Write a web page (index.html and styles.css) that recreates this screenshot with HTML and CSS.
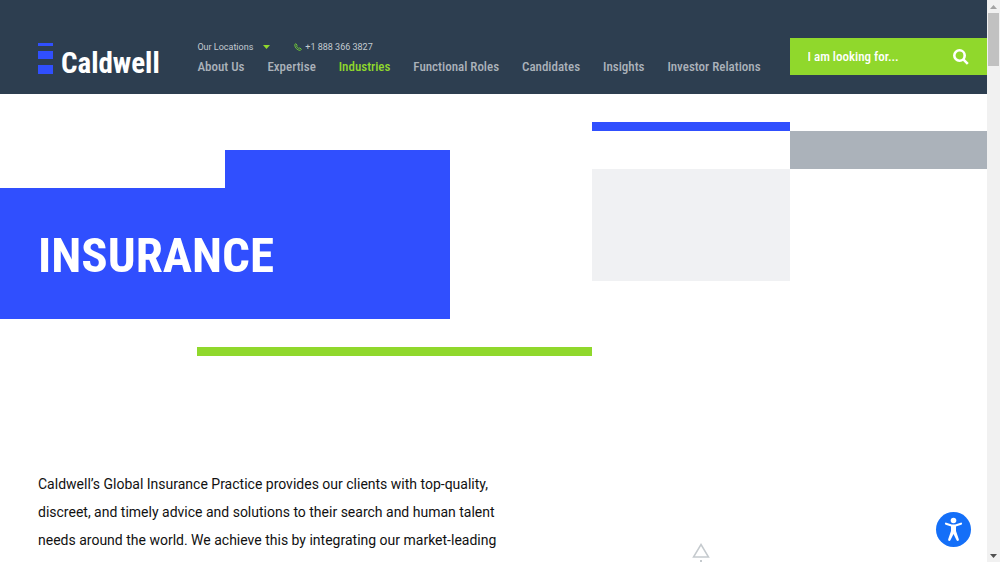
FILE: index.html
```
<!DOCTYPE html>
<html lang="en">
<head>
  <meta charset="UTF-8">
  <title>Insurance | Caldwell</title>
  <meta name="viewport" content="width=device-width, initial-scale=1">
  <link rel="stylesheet" href="styles.css">
</head>
<body>
  <div class="page">
    <header class="header">
      <a href="#" class="logo">
        <svg class="logo-mark" width="15" height="32" viewBox="0 0 15 32" aria-hidden="true">
          <path fill="#304ffe" d="M0 0h15v3H0zM0 8h15v8H0zM0 22h15v9H0z"/>
        </svg>
        <span>Caldwell</span>
      </a>
      <div class="header-nav">
        <div class="top-links">
          <button type="button" class="locations">Our Locations
            <svg width="7" height="4" viewBox="0 0 7 4" aria-hidden="true"><path fill="#90d82c" d="M0 0h7L3.500 4z"/></svg>
          </button>
          <a href="tel:+18883663827" class="phone">
            <svg width="8" height="8" viewBox="0 0 8 8" aria-hidden="true"><path fill="none" stroke="#6fc43a" d="M1.900.700.700 1.600C.700 4.800 3.500 7.400 6.300 7.400L7.400 6.200 5.800 4.900 4.900 5.500C3.800 5 3 4.200 2.500 3.100L3.100 2.300z"/></svg>
            +1 888 366 3827
          </a>
        </div>
        <nav class="main-nav">
          <a href="#">About Us</a>
          <a href="#">Expertise</a>
          <a href="#" class="active">Industries</a>
          <a href="#">Functional Roles</a>
          <a href="#">Candidates</a>
          <a href="#">Insights</a>
          <a href="#">Investor Relations</a>
        </nav>
      </div>
      <form class="search">
        <input type="text" placeholder="I am looking for..." aria-label="Search">
        <button type="submit" aria-label="Search">
          <svg width="16" height="16" viewBox="0 0 16 16"><g fill="none" stroke="#fff" stroke-width="2.600"><circle cx="6.500" cy="6.500" r="5.200"/><path d="M10.300 10.300l4.500 4.500"/></g></svg>
        </button>
      </form>
    </header>

    <main>
      <section class="hero">
        <div class="block block-blue"></div>
        <div class="block block-grey"></div>
        <div class="block block-light"></div>
        <div class="hero-title">
          <h1>INSURANCE</h1>
        </div>
        <div class="block block-green"></div>
      </section>

      <section class="intro">
        <p>Caldwell’s Global Insurance Practice provides our clients with top-quality,<br>
          discreet, and timely advice and solutions to their search and human talent<br>
          needs around the world. We achieve this by integrating our market-leading</p>
        <div class="intro-graphic">
          <svg width="18" height="20" viewBox="0 0 18 20" aria-hidden="true">
            <path fill="none" stroke="#c5cace" stroke-width="1.500" d="M9 1.500 16.500 14h-15z"/>
            <path fill="#c5cace" d="M8 17h2v3H8z"/>
          </svg>
        </div>
      </section>
    </main>

    <button type="button" class="accessibility" aria-label="Accessibility menu">
      <svg width="35" height="35" viewBox="0 0 35 35">
        <circle cx="17.500" cy="8.500" r="2.800" fill="#fff"/>
        <path fill="none" stroke="#fff" stroke-width="2.200" stroke-linecap="round" stroke-linejoin="round" d="M10 11.700l5.500 1.800h4l5.500-1.800"/>
        <path fill="#fff" d="M15 13h5v6l2.800 8.200a1.200 1.200 0 0 1-2.200 1L17.500 22l-3.100 6.200a1.200 1.200 0 0 1-2.200-1L15 19z"/>
      </svg>
    </button>
  </div>

  <div class="scrollbar" aria-hidden="true">
    <svg width="7" height="4" viewBox="0 0 7 4"><path fill="#a3a3a3" d="M0 4h7L3.500 0z"/></svg>
    <div class="scrollbar-thumb"></div>
    <svg width="7" height="4" viewBox="0 0 7 4"><path fill="#505050" d="M0 0h7L3.500 4z"/></svg>
  </div>
</body>
</html>
```

FILE: styles.css
```
:root {
  --navy: #2d3e50;
  --blue: #304ffe;
  --green: #90d82c;
  --grey: #abb2ba;
  --light: #f0f1f3;
  --condensed: 'Roboto Condensed', 'Liberation Sans Narrow', 'Liberation Sans', sans-serif;
  --sans: Roboto, 'Liberation Sans', sans-serif;
}
* {
  box-sizing: border-box;
}
body {
  margin: 0;
  height: 100vh;
  display: flex;
  overflow: hidden;
  background: #fff;
  color: #111;
  font-family: var(--sans);
}
a {
  color: inherit;
  text-decoration: none;
}
button, input {
  border: 0;
  padding: 0;
  background: none;
  color: inherit;
  font: inherit;
}
button {
  cursor: pointer;
}
.page {
  position: relative;
  flex: 1;
  min-width: 0;
  overflow: hidden;
}

/* header */
.header {
  display: grid;
  grid-template-columns: minmax(0, 1fr) minmax(0, 3fr) minmax(0, 1fr);
  height: 94px;
  padding-top: 38px;
  background: var(--navy);
  color: var(--grey);
}
.logo {
  display: flex;
  gap: 8px;
  padding: 5px 0 0 38px;
  color: #fff;
  font: bold 29px/40px var(--condensed);
}
.top-links {
  display: flex;
  gap: 24px;
  height: 18px;
  color: #c3cad1;
  font-size: 9px;
  line-height: 18px;
}
.locations, .phone {
  display: flex;
  align-items: center;
}
.locations {
  gap: 10px;
}
.phone {
  gap: 3px;
}
.main-nav {
  display: flex;
  justify-content: space-between;
  padding-right: 29px;
  font: 500 13px/22px var(--condensed);
  white-space: nowrap;
}
.main-nav .active {
  color: var(--green);
}
.search {
  display: flex;
  align-items: center;
  height: 37px;
  padding: 0 18px;
  background: var(--green);
  color: #fff;
  font: 500 13px/20px var(--condensed);
}
.search input {
  flex: 1;
  min-width: 0;
  outline: none;
}
.search input::placeholder {
  color: #fff;
  opacity: 1;
}
.search button {
  display: flex;
}

/* hero blocks sit on the same five columns as the header */
.hero {
  display: grid;
  grid-template-columns: repeat(5, 1fr);
  grid-template-rows: 9px 19px 19px 112px 38px 28px 9px;
  padding-top: 28px;
}
.block-blue {
  grid-area: 1 / 4 / 2 / 5;
  background: var(--blue);
}
.block-grey {
  grid-area: 2 / 5 / 4 / 6;
  background: var(--grey);
}
.block-light {
  grid-area: 4 / 4 / 5 / 5;
  background: var(--light);
}
.block-green {
  grid-area: 7 / 2 / 8 / 4;
  background: var(--green);
}
.hero-title {
  grid-area: 3 / 1 / 6 / 4;
  display: flex;
  flex-direction: column;
  width: 76%;
}
.hero-title::before {
  content: '';
  height: 38px;
  margin-left: 50%;
  background: var(--blue);
}
.hero-title h1 {
  flex: 1;
  display: flex;
  align-items: center;
  margin: 0;
  padding: 4px 0 0 38px;
  background: var(--blue);
  color: #fff;
  font: bold 49px/64px var(--condensed);
}

/* intro */
.intro {
  display: grid;
  grid-template-columns: 1fr 1fr;
  padding: 114px 38px 0;
}
.intro p {
  margin: 0;
  font-size: 14px;
  line-height: 28px;
  white-space: nowrap;
}
.intro-graphic {
  padding: 73px 0 0 196px;
}

.accessibility {
  position: absolute;
  right: 16px;
  bottom: 15px;
  width: 35px;
  height: 35px;
  border-radius: 50%;
  background: #146ff8;
}
.accessibility svg {
  display: block;
}

.scrollbar {
  display: flex;
  flex-direction: column;
  align-items: center;
  width: 13px;
  padding: 5px 0 4px;
  background: #f1f1f1;
}
.scrollbar-thumb {
  width: 11px;
  height: 53px;
  margin: 4px 0 auto;
  background: #c1c1c1;
}
```
